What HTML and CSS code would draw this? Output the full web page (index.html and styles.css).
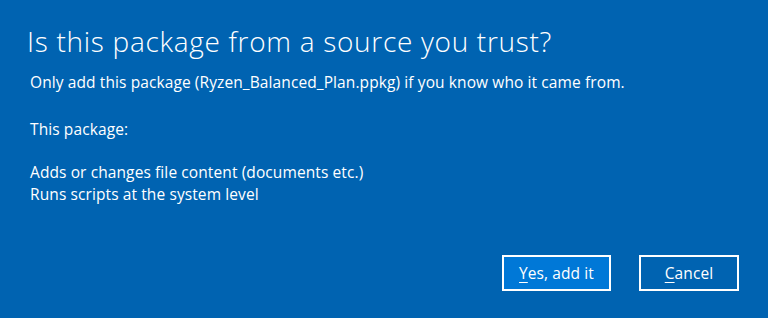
FILE: index.html
```html
<!DOCTYPE html>
<html lang="en">
<head>
    <meta charset="UTF-8">
    <meta name="viewport" content="width=device-width, initial-scale=1.0">
    <title>Is this package from a source you trust?</title>
    <link rel="stylesheet" href="styles.css">
</head>
<body>
    <div class="dialog">
        <h1>Is this package from a source you trust?</h1>
        <p class="intro">Only add this package (Ryzen_Balanced_Plan.ppkg) if you know who it came from.</p>
        <p class="label">This package:</p>
        <ul class="effects">
            <li>Adds or changes file content (documents etc.)</li>
            <li>Runs scripts at the system level</li>
        </ul>
        <div class="actions">
            <button class="btn btn-primary"><u>Y</u>es, add it</button>
            <button class="btn"><u>C</u>ancel</button>
        </div>
    </div>
</body>
</html>
```

FILE: styles.css
```css
* {
    margin: 0;
    padding: 0;
    box-sizing: border-box;
}
html, body {
    height: 100%;
}
body {
    font-family: 'Open Sans', 'Noto Sans', sans-serif;
    background: #0063b1;
    color: #fff;
    font-size: 15.5px;
    letter-spacing: 0.1px;
}
.dialog {
    height: 100%;
    display: flex;
    flex-direction: column;
    padding: 21px 29px 27px 30px;
}
.dialog h1 {
    font-size: 28px;
    font-weight: 300;
    letter-spacing: 0.7px;
    line-height: 40px;
    margin-left: -3px;
}
.intro {
    line-height: 22px;
    margin-top: 10px;
}
.label {
    line-height: 22px;
    margin-top: 25px;
}
.effects {
    list-style: none;
    margin-top: 21px;
    line-height: 22px;
}
.actions {
    margin-top: auto;
    display: flex;
    justify-content: flex-end;
    gap: 28px;
}
.btn {
    font-family: inherit;
    font-size: 15.5px;
    letter-spacing: 0.1px;
    color: #fff;
    background: transparent;
    border: 2px solid #fff;
    height: 36px;
    width: 100px;
    cursor: pointer;
}
.btn-primary {
    width: 109px;
    background: #0078d7;
}
.btn u {
    text-underline-offset: 3px;
}
```
